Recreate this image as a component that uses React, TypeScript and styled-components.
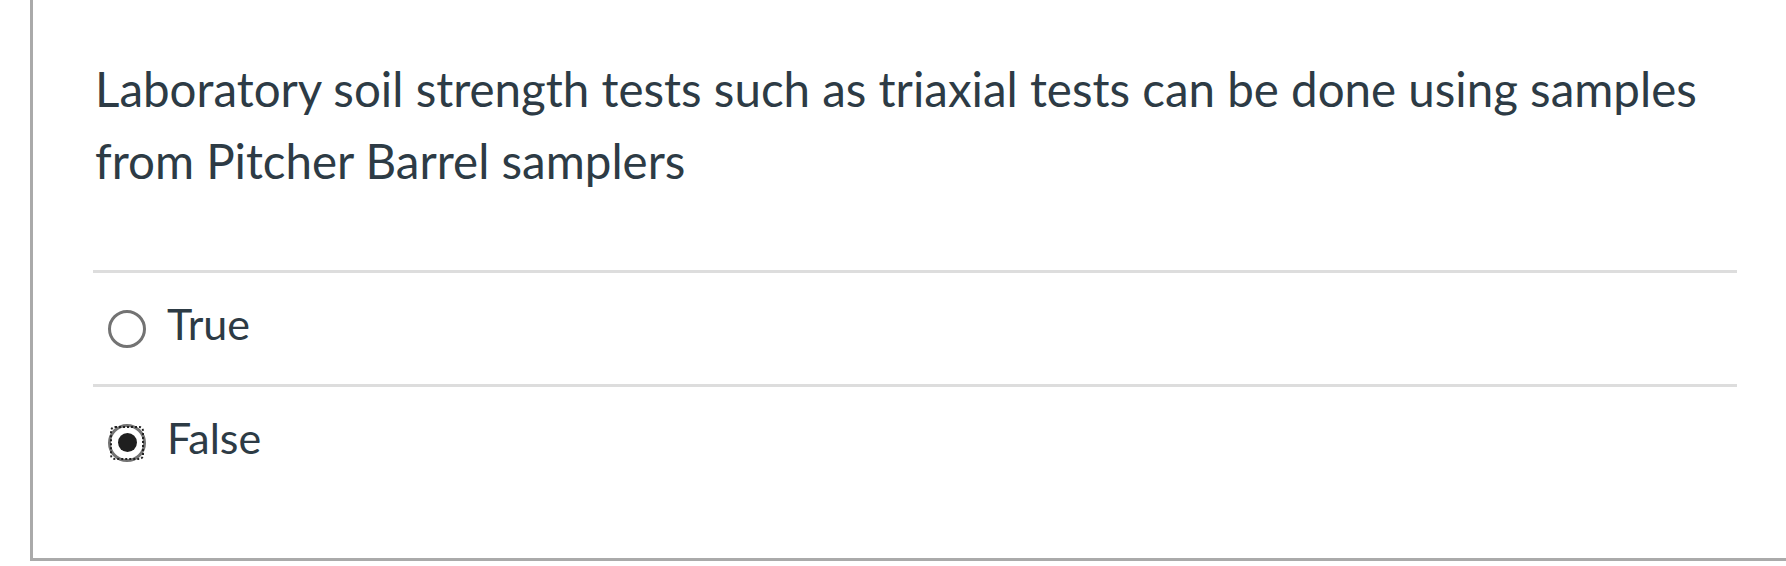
import { useState } from 'react';
import styled, { createGlobalStyle } from 'styled-components';

const GlobalStyle = createGlobalStyle`
  html, body {
    margin: 0;
    padding: 0;
    background: #fff;
  }
  body {
    font-family: Lato, 'Noto Sans', 'Liberation Sans', sans-serif;
    color: #2d3b45;
  }
`;

type Option = { id: string; label: string };

const options: Option[] = [
  { id: 'true', label: 'True' },
  { id: 'false', label: 'False' },
];

export default function App() {
  const [answer, setAnswer] = useState('false');

  return (
    <>
      <GlobalStyle />
      <SFrame>
        <SQuestion>
          Laboratory soil strength tests such as triaxial tests can be done using samples
          from Pitcher Barrel samplers
        </SQuestion>
        <SAnswers>
          {options.map((o) => (
            <SRow key={o.id}>
              <SHiddenInput
                type='radio'
                name='answer'
                value={o.id}
                checked={answer === o.id}
                onChange={() => setAnswer(o.id)}
              />
              <SMark $checked={answer === o.id}>
                {answer === o.id && <SFocus />}
              </SMark>
              <SLabel>{o.label}</SLabel>
            </SRow>
          ))}
        </SAnswers>
      </SFrame>
    </>
  );
}

const SFrame = styled.div`
  box-sizing: border-box;
  margin-left: 30px;
  width: calc(100% - 30px);
  padding: 53px 49px 60px 60px;
  border-left: 3px solid #aaaaaa;
  border-bottom: 3px solid #aaaaaa;
`;

const SQuestion = styled.p`
  margin: 0 0 73px 2px;
  font-size: 47.5px;
  line-height: 72px;
  font-weight: 400;
`;

const SAnswers = styled.div`
  display: flex;
  flex-direction: column;
`;

const SRow = styled.label`
  display: flex;
  align-items: center;
  height: 111px;
  border-top: 3px solid #dddddd;
  padding-left: 15px;
  cursor: pointer;
`;

const SHiddenInput = styled.input`
  position: absolute;
  opacity: 0;
  width: 0;
  height: 0;
  margin: 0;
`;

const SMark = styled.span<{ $checked: boolean }>`
  position: relative;
  box-sizing: border-box;
  flex: none;
  width: 38px;
  height: 38px;
  border-radius: 50%;
  border: 3px solid #737373;
  display: flex;
  align-items: center;
  justify-content: center;
  &::after {
    content: '';
    display: ${(p) => (p.$checked ? 'block' : 'none')};
    width: 19px;
    height: 19px;
    border-radius: 50%;
    background: #1f1f1f;
  }
`;

const SFocus = styled.span`
  position: absolute;
  left: -1px;
  top: -1px;
  width: 34px;
  height: 34px;
  box-sizing: border-box;
  border: 2px dotted #222;
  border-radius: 5px;
`;

const SLabel = styled.span`
  margin-left: 21px;
  margin-bottom: 10px;
  font-size: 43px;
  line-height: 52px;
`;
